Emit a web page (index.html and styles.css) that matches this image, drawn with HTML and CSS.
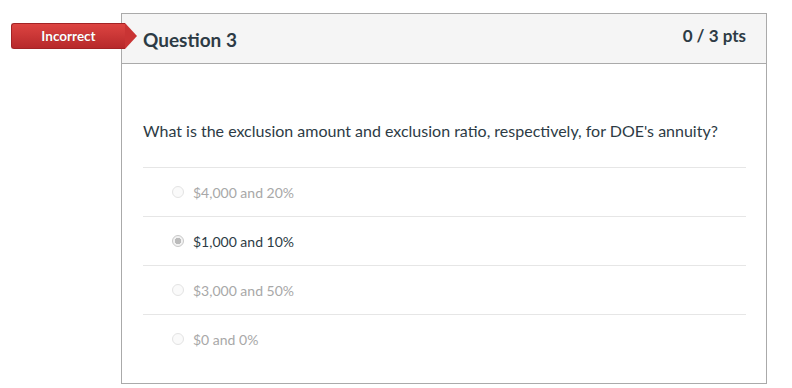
FILE: index.html
```html
<!DOCTYPE html>
<html>
<head>
<meta charset="utf-8">
<link rel="stylesheet" href="styles.css">
</head>
<body>
<div class="page">
  <div class="badge">Incorrect</div>
  <div class="question">
    <div class="header">
      <span class="name">Question 3</span>
      <span class="pts">0 / 3 pts</span>
    </div>
    <div class="content">
      <p class="text">What is the exclusion amount and exclusion ratio, respectively, for DOE's annuity?</p>
      <div class="answers">
        <div class="answer"><span class="radio"></span><span class="label">$4,000 and 20%</span></div>
        <div class="answer selected"><span class="radio"></span><span class="label">$1,000 and 10%</span></div>
        <div class="answer"><span class="radio"></span><span class="label">$3,000 and 50%</span></div>
        <div class="answer"><span class="radio"></span><span class="label">$0 and 0%</span></div>
      </div>
    </div>
  </div>
</div>
</body>
</html>
```
FILE: styles.css
```css
html, body { margin: 0; padding: 0; background: #fff; }
body { font-family: Lato, "Open Sans", sans-serif; color: #2d3b45; }
.page { position: relative; padding: 13px 0 0 121px; }
.badge {
  position: absolute; left: 11px; top: 23px;
  width: 114px; height: 26px; box-sizing: border-box;
  background: linear-gradient(#dd4441, #b7292b);
  border: 1px solid #a32325; border-right: none;
  border-radius: 3px 0 0 3px;
  color: #fff; font-weight: 700; font-size: 13.5px;
  line-height: 24px; text-align: center;
  text-shadow: 0 0 1px rgba(0,0,0,0.3);
}
.badge::after {
  content: ""; position: absolute; right: -12px; top: -1px;
  border-style: solid; border-width: 13px 0 13px 12px;
  border-color: transparent transparent transparent #c93434;
}
.question {
  width: 646px; height: 371px; box-sizing: border-box;
  border: 1px solid #aaa;
}
.header {
  display: flex; justify-content: space-between; align-items: center;
  height: 50px; box-sizing: border-box;
  background: #f5f5f5; border-bottom: 1px solid #aaa;
  padding: 0 20px 0 21px;
}
.name { font-size: 19px; font-weight: 700; margin-top: 1px; }
.pts { font-size: 17px; font-weight: 700; color: #2d3b45; margin-top: -6px; }
.content { padding: 0 20px 0 21px; }
.text { margin: 0; padding: 56px 0 26px; font-size: 16px; line-height: 21px; }
.answer {
  display: flex; align-items: center; height: 48px;
  border-top: 1px solid #e6e6e6;
  padding-left: 29px; font-size: 14px; color: #a8a8a8;
}
.answer.selected { color: #2d3b45; }
.radio {
  width: 12px; height: 12px; border-radius: 50%; box-sizing: border-box;
  border: 1px solid #e3e3e3; background: #fafafa; margin-right: 9px;
}
.selected .radio {
  border-color: #c8c8c8; background: radial-gradient(circle, #bbb 0 3px, #f2f2f2 3.5px);
}
```
